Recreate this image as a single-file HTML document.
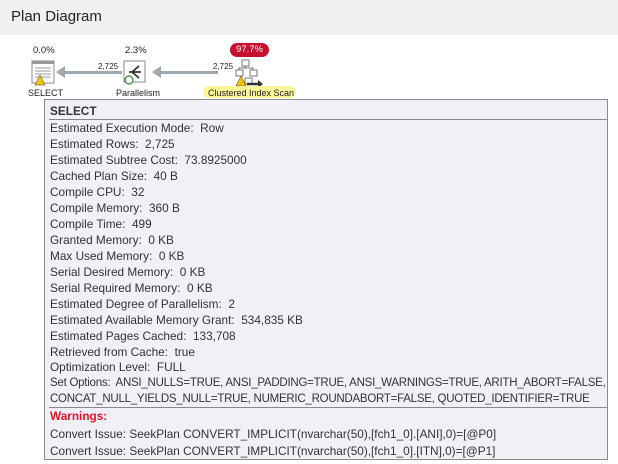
<!DOCTYPE html>
<html><head><style>
body{margin:0;width:618px;height:464px;background:#fff;font-family:"Liberation Sans",sans-serif;position:relative;overflow:hidden}
.hdr{position:absolute;left:0;top:0;width:618px;height:35px;background:#f0f0f0;}
.hdr span{position:absolute;left:11px;top:8px;font-size:15px;color:#222}
.s{position:absolute;font-size:9px;color:#222}
.tip{position:absolute;left:44px;top:99px;width:564px;height:361px;background:#f0f0f6;border:1px solid #8a8a8a;box-sizing:border-box;}
.t{position:absolute;left:50px;font-size:11.8px;color:#333;white-space:nowrap;line-height:14px}
.hr{position:absolute;left:49px;width:559px;height:1px;background:#888}
</style></head><body>
<div class="hdr"><span>Plan Diagram</span></div>
<div class="s" style="left:33px;top:45px;font-size:9.5px">0.0%</div>
<div class="s" style="left:125px;top:45px;font-size:9.5px">2.3%</div>
<div style="position:absolute;left:230px;top:43px;width:39px;height:14px;border-radius:7px;background:#c8102e;color:#fff;font-size:9.5px;text-align:center;line-height:14px">97.7%</div>
<svg style="position:absolute;left:30px;top:60px" width="28" height="26"><rect x="2" y="1" width="22" height="22" fill="#fff" stroke="#888"/><rect x="2" y="1" width="22" height="3" fill="#999"/><g stroke="#999"><line x1="5" y1="8" x2="21" y2="8"/><line x1="5" y1="11" x2="21" y2="11"/><line x1="5" y1="14" x2="21" y2="14"/><line x1="5" y1="17" x2="21" y2="17"/></g><polygon points="5,25 10,15 15,25" fill="#f5c400" stroke="#333" stroke-width=".5"/></svg>
<div style="position:absolute;left:62px;top:71px;width:60px;height:3px;background:#9aa8b4"></div>
<svg style="position:absolute;left:56px;top:66px" width="10" height="12"><polygon points="0,6 9,0 9,12" fill="#9aa8b4"/></svg>
<div class="s" style="left:98px;top:62px;font-size:8px">2,725</div>
<svg style="position:absolute;left:122px;top:60px" width="30" height="26"><rect x="2" y="1" width="21" height="21" fill="#fff" stroke="#888"/><path d="M7 12 H19 M10 12 L17 6 M10 12 L17 18" stroke="#333" stroke-width="1.8" fill="none"/><circle cx="7" cy="20" r="4" fill="#fff" stroke="#2a8a3a" stroke-width="1.2"/></svg>
<div style="position:absolute;left:158px;top:71px;width:60px;height:3px;background:#9aa8b4"></div>
<svg style="position:absolute;left:152px;top:66px" width="10" height="12"><polygon points="0,6 9,0 9,12" fill="#9aa8b4"/></svg>
<div class="s" style="left:213px;top:62px;font-size:8px">2,725</div>
<svg style="position:absolute;left:235px;top:59px" width="30" height="28"><g fill="#fff" stroke="#777"><rect x="7" y="1" width="7" height="6"/><rect x="1" y="11" width="7" height="6"/><rect x="15" y="11" width="7" height="6"/><rect x="10" y="19" width="7" height="6"/></g><path d="M10 7V9H4V11M10 9H18V11" stroke="#777" fill="none"/><path d="M12 25H24" stroke="#333" stroke-width="2.5"/><polygon points="23,21 28,25 23,29" fill="#333"/><polygon points="1,27 6,17 11,27" fill="#f5c400" stroke="#333" stroke-width=".5"/></svg>
<div class="s" style="left:28px;top:88px">SELECT</div>
<div class="s" style="left:116px;top:88px">Parallelism</div>
<div style="position:absolute;left:203px;top:86px;width:93px;height:12px;border-radius:6px;background:#fbf59a"></div>
<div class="s" style="left:208px;top:88px">Clustered Index Scan</div>
<div class="tip"></div>
<div class="t" style="top:104px;font-weight:bold">SELECT</div>
<div class="hr" style="top:119px"></div>
<div class="t" style="top:121px">Estimated Execution Mode:&nbsp; Row</div>
<div class="t" style="top:137px">Estimated Rows:&nbsp; 2,725</div>
<div class="t" style="top:153px">Estimated Subtree Cost:&nbsp; 73.8925000</div>
<div class="t" style="top:169px">Cached Plan Size:&nbsp; 40 B</div>
<div class="t" style="top:185px">Compile CPU:&nbsp; 32</div>
<div class="t" style="top:201px">Compile Memory:&nbsp; 360 B</div>
<div class="t" style="top:217px">Compile Time:&nbsp; 499</div>
<div class="t" style="top:233px">Granted Memory:&nbsp; 0 KB</div>
<div class="t" style="top:249px">Max Used Memory:&nbsp; 0 KB</div>
<div class="t" style="top:265px">Serial Desired Memory:&nbsp; 0 KB</div>
<div class="t" style="top:281px">Serial Required Memory:&nbsp; 0 KB</div>
<div class="t" style="top:297px">Estimated Degree of Parallelism:&nbsp; 2</div>
<div class="t" style="top:313px">Estimated Available Memory Grant:&nbsp; 534,835 KB</div>
<div class="t" style="top:329px">Estimated Pages Cached:&nbsp; 133,708</div>
<div class="t" style="top:345px">Retrieved from Cache:&nbsp; true</div>
<div class="t" style="top:360px">Optimization Level:&nbsp; FULL</div>
<div class="t" style="top:376px;font-size:11.5px;letter-spacing:-0.25px">Set Options:&nbsp; ANSI_NULLS=TRUE, ANSI_PADDING=TRUE, ANSI_WARNINGS=TRUE, ARITH_ABORT=FALSE,</div>
<div class="t" style="top:392px;font-size:11.5px;letter-spacing:-0.25px">CONCAT_NULL_YIELDS_NULL=TRUE, NUMERIC_ROUNDABORT=FALSE, QUOTED_IDENTIFIER=TRUE</div>
<div class="hr" style="top:407px"></div>
<div class="t" style="top:409px;font-weight:bold;color:#e8102a">Warnings:</div>
<div class="t" style="top:427px">Convert Issue: SeekPlan CONVERT_IMPLICIT(nvarchar(50),[fch1_0].[ANI],0)=[@P0]</div>
<div class="t" style="top:444px">Convert Issue: SeekPlan CONVERT_IMPLICIT(nvarchar(50),[fch1_0].[ITN],0)=[@P1]</div>
</body></html>
